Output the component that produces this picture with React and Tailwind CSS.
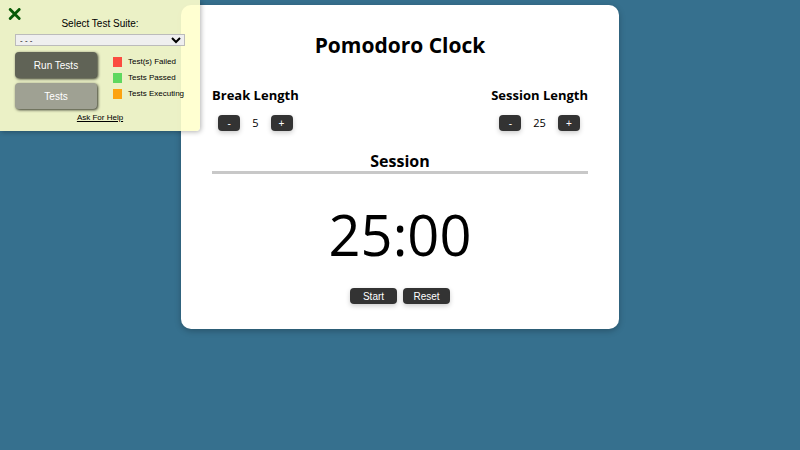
import { useEffect, useState } from 'react'

const legend = [
  { color: 'bg-[#fb4c40]', label: 'Test(s) Failed' },
  { color: 'bg-[#5fd85f]', label: 'Tests Passed' },
  { color: 'bg-[#fca311]', label: 'Tests Executing' },
]

const darkButton =
  'rounded-sm bg-[#333] text-white shadow-[0_2px_5px_rgba(0,0,0,0.2)] hover:bg-[#444] cursor-pointer'

function TestPanel({ onClose }) {
  return (
    <aside className="absolute top-0 left-0 w-[200px] rounded-br-sm bg-[rgba(255,255,204,0.9)] px-[15px] pt-2 pb-[7px] font-['Liberation_Sans',sans-serif] text-black shadow-[1px_1px_5px_rgba(0,0,0,0.3)]">
      <button type="button" aria-label="Close" onClick={onClose} className="absolute top-2 left-2 cursor-pointer">
        <svg viewBox="0 0 13 12" className="h-3 w-[13px]" fill="none" stroke="#075a07" strokeWidth="2.8" strokeLinecap="round">
          <path d="M2.2 1.4 11.2 10.6M11.2 1.4 2.2 10.6" />
        </svg>
      </button>

      <label htmlFor="test-suite" className="mt-2 block text-center text-[10px] leading-4">
        Select Test Suite:
      </label>
      <select
        id="test-suite"
        className="mt-[2px] block h-3 w-full border border-[#bbb] bg-[#efefef] text-[8px] leading-none"
      >
        <option>- - -</option>
        <option>Pomodoro Clock</option>
      </select>

      <div className="mt-[6px] flex items-start justify-between">
        <div className="flex w-[82px] flex-col gap-[5px] text-[10px] text-white">
          <button type="button" className="h-[26px] rounded-sm bg-[#606356] shadow-[1px_1px_3px_rgba(0,0,0,0.8)]">
            Run Tests
          </button>
          <button type="button" className="h-[26px] rounded-sm bg-[#9fa193] shadow-[1px_1px_3px_rgba(0,0,0,0.8)]">
            Tests
          </button>
        </div>
        <ul className="mt-1 flex w-[72px] flex-col gap-1 text-[8px] leading-3 whitespace-nowrap">
          {legend.map((l) => (
            <li key={l.label} className="flex items-center gap-[6px]">
              <span className={`h-[10px] w-[9px] shrink-0 ${l.color}`} />
              {l.label}
            </li>
          ))}
        </ul>
      </div>

      <a href="#help" className="mt-[3px] block text-center text-[8px] leading-3 underline">
        Ask For Help
      </a>
    </aside>
  )
}

function LengthControl({ label, value, onChange }) {
  return (
    <section className="flex flex-col items-center">
      <h2 className="text-[13px] leading-5 font-bold">{label}</h2>
      <div className="mt-[10px] flex items-center">
        <button
          type="button"
          aria-label={`Decrease ${label}`}
          onClick={() => onChange(Math.max(1, value - 1))}
          className={`h-4 w-[22px] font-['Liberation_Sans',sans-serif] text-[10px] ${darkButton}`}
        >
          -
        </button>
        <span className="px-3 text-center text-[11px] leading-4">{value}</span>
        <button
          type="button"
          aria-label={`Increase ${label}`}
          onClick={() => onChange(Math.min(60, value + 1))}
          className={`h-4 w-[22px] font-['Liberation_Sans',sans-serif] text-[10px] ${darkButton}`}
        >
          +
        </button>
      </div>
    </section>
  )
}

export default function App() {
  const [breakLength, setBreakLength] = useState(5)
  const [sessionLength, setSessionLength] = useState(25)
  const [mode, setMode] = useState('Session')
  const [seconds, setSeconds] = useState(25 * 60)
  const [running, setRunning] = useState(false)
  const [panelOpen, setPanelOpen] = useState(true)

  useEffect(() => {
    if (!running) return
    const id = setTimeout(() => {
      if (seconds > 0) {
        setSeconds(seconds - 1)
      } else if (mode === 'Session') {
        setMode('Break')
        setSeconds(breakLength * 60)
      } else {
        setMode('Session')
        setSeconds(sessionLength * 60)
      }
    }, 1000)
    return () => clearTimeout(id)
  }, [running, seconds, mode, breakLength, sessionLength])

  const changeBreak = (n) => {
    if (running) return
    setBreakLength(n)
    if (mode === 'Break') setSeconds(n * 60)
  }

  const changeSession = (n) => {
    if (running) return
    setSessionLength(n)
    if (mode === 'Session') setSeconds(n * 60)
  }

  const reset = () => {
    setRunning(false)
    setMode('Session')
    setBreakLength(5)
    setSessionLength(25)
    setSeconds(25 * 60)
  }

  const mm = String(Math.floor(seconds / 60)).padStart(2, '0')
  const ss = String(seconds % 60).padStart(2, '0')

  return (
    <div className="relative min-h-screen bg-[#36708e] pt-[5px] font-['Open_Sans',sans-serif] text-black">
      <main className="mx-auto w-full max-w-[438px] rounded-[10px] bg-white px-[31px] pt-6 pb-[25px] shadow-[0_2px_6px_rgba(0,0,0,0.25)]">
        <h1 className="text-center text-[21px] leading-8 font-bold">Pomodoro Clock</h1>

        <div className="mt-6 flex justify-between">
          <LengthControl label="Break Length" value={breakLength} onChange={changeBreak} />
          <LengthControl label="Session Length" value={sessionLength} onChange={changeSession} />
        </div>

        <h2 className="mt-5 border-b-[3px] border-[#c8c8c8] text-center text-[16px] leading-5 font-bold">{mode}</h2>

        <div className="mt-5 text-center text-[56px] leading-[80px]">
          {mm}:{ss}
        </div>

        <div className="mt-[14px] flex justify-center gap-[6px] font-['Liberation_Sans',sans-serif] text-[10px]">
          <button type="button" onClick={() => setRunning((r) => !r)} className={`h-4 w-[47px] ${darkButton}`}>
            {running ? 'Stop' : 'Start'}
          </button>
          <button type="button" onClick={reset} className={`h-4 w-[47px] ${darkButton}`}>
            Reset
          </button>
        </div>
      </main>

      {panelOpen && <TestPanel onClose={() => setPanelOpen(false)} />}
    </div>
  )
}
